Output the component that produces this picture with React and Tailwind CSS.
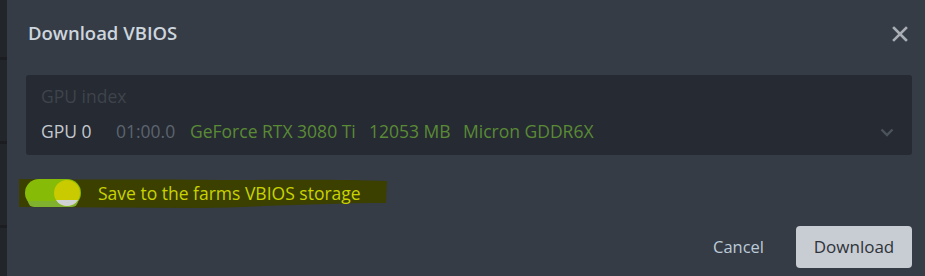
import React from "react";

export default function App() {
  return (
    <div className="flex h-[276px] w-[925px] overflow-hidden bg-[#22252a]" style={{ fontFamily: '"Open Sans", "Noto Sans", sans-serif' }}>
      <div className="flex w-[7px] flex-col">
        <div className="h-[60px] border-b-[3px] border-[#1b1d21]" />
        <div className="h-[84px] border-b-[3px] border-[#1b1d21]" />
        <div className="h-[84px] border-b-[3px] border-[#1b1d21]" />
      </div>
      <div className="relative flex flex-1 flex-col bg-[#363c45] pl-[19px] pr-[13px]">
        <div className="flex h-[68px] items-center justify-between pl-[2px] pb-[2px]">
          <h2 className="text-[18.5px] font-semibold text-[#cdd6df]">Download VBIOS</h2>
          <svg width="16" height="16" viewBox="0 0 16 16" className="mr-[4px] mt-[1px]">
            <path d="M2 2 L14 14 M14 2 L2 14" stroke="#a9aeb5" strokeWidth="2.6" strokeLinecap="square" />
          </svg>
        </div>
        <div className="mt-[7px] flex h-[80px] flex-col rounded-[3px] bg-[#262a32] pl-[15px] pr-[18px]">
          <div className="pt-[10px] text-[17.5px] leading-[22px] text-[#3e444c]">GPU index</div>
          <div className="mt-[13px] flex items-center text-[17.5px] leading-[22px]">
            <span className="w-[75px] text-[#c3c9cf]">GPU 0</span>
            <span className="w-[74px] text-[#5c6470]">01:00.0</span>
            <span className="w-[179px] text-[#5a8a36]">GeForce RTX 3080 Ti</span>
            <span className="w-[94px] text-[#5a8a36]">12053 MB</span>
            <span className="flex-1 text-[#5a8a36]">Micron GDDR6X</span>
            <svg width="14" height="9" viewBox="0 0 14 9" className="mt-[2px]">
              <path d="M1.5 1.5 L7 7 L12.5 1.5" stroke="#4d535c" strokeWidth="2.4" fill="none" />
            </svg>
          </div>
        </div>
        <div className="relative mt-[21px] flex h-[34px] items-center">
          <svg className="absolute left-[-7px] top-[1px]" width="375" height="34" viewBox="0 0 375 34">
            <path d="M0 2 C60 3 120 2 200 3 C260 3 320 2 368 4 L367 26 C300 26 240 30 180 31 C120 31 60 30 0 30 Z" fill="#3b3f00" />
          </svg>
          <div className="relative ml-[-1px] h-[28px] w-[56px] rounded-full bg-[#86bb08]">
            <div className="absolute bottom-0 left-[3px] right-[3px] h-[6px] rounded-b-full bg-[#7fb02e]" />
            <div className="absolute right-[1px] top-[1px] h-[26px] w-[26px] overflow-hidden rounded-full bg-[#c9ca00]">
              <div className="absolute bottom-0 left-0 right-0 h-[6px] bg-[#cfd3d6]" />
            </div>
          </div>
          <span className="relative ml-[17px] text-[17.5px] text-[#c9d300]">Save to the farms VBIOS storage</span>
        </div>
        <div className="mt-[16px] flex items-center justify-end">
          <span className="mr-[32px] text-[16.5px] text-[#bccbd9]">Cancel</span>
          <button className="h-[42px] w-[116px] rounded-[4px] bg-[#c8ccd3] text-[17px] text-[#2e333a]">Download</button>
        </div>
      </div>
    </div>
  );
}
